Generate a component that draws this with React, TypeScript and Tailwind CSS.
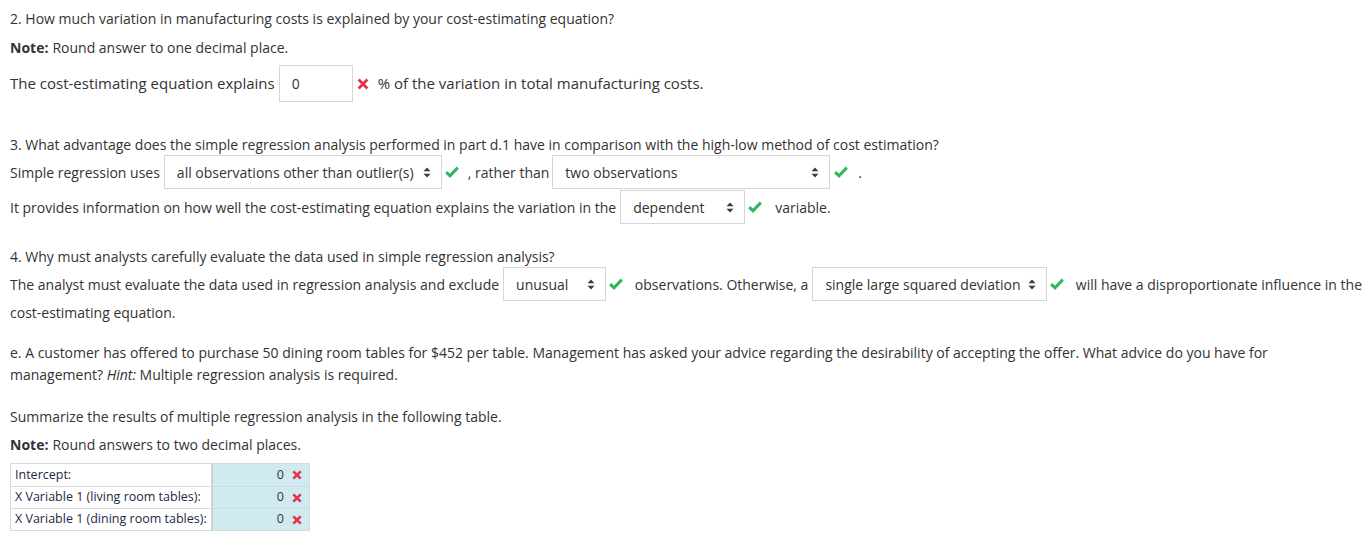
import React from "react";

const font = { fontFamily: '"Open Sans", "Noto Sans", sans-serif' };

function Check() {
  return (
    <svg width="14" height="12" viewBox="0 0 14 12" className="shrink-0">
      <path d="M1.2 6.2 L5 9.8 L12.8 1.6" fill="none" stroke="#2cb85c" strokeWidth="3" />
    </svg>
  );
}

function Cross() {
  return (
    <svg width="12" height="12" viewBox="0 0 12 12" className="shrink-0">
      <path d="M1.6 1.6 L10.4 10.4 M10.4 1.6 L1.6 10.4" fill="none" stroke="#e53146" strokeWidth="2.8" />
    </svg>
  );
}

function Arrows() {
  return (
    <svg width="8" height="11" viewBox="0 0 8 11" className="shrink-0">
      <path d="M4 0.5 L7.5 4.2 L0.5 4.2 Z" fill="#3a3a3a" />
      <path d="M4 10.5 L7.5 6.8 L0.5 6.8 Z" fill="#3a3a3a" />
    </svg>
  );
}

function Select({ value, width }: { value: string; width: string }) {
  return (
    <div
      className={`flex h-[34px] items-center justify-between border border-[#d3d6da] bg-white pl-3 pr-[10px] ${width}`}
    >
      <span>{value}</span>
      <Arrows />
    </div>
  );
}

const rows = ["Intercept:", "X Variable 1 (living room tables):", "X Variable 1 (dining room tables):"];

export default function App() {
  return (
    <div className="flex flex-col px-[10px] text-[14px] text-[#333]" style={font}>
      <div className="mt-[8px] flex h-[20px] items-center">
        2. How much variation in manufacturing costs is explained by your cost-estimating equation?
      </div>
      <div className="mt-[9px] flex h-[20px] items-center">
        <span className="mr-1 font-bold">Note:</span> Round answer to one decimal place.
      </div>
      <div className="mt-[8px] flex h-[37px] items-center text-[15px]">
        <span>The cost-estimating equation explains</span>
        <div className="ml-[4px] flex h-[37px] w-[74px] items-center border border-[#d3d6da] pl-3 text-[14px]">0</div>
        <span className="ml-[4px]">
          <Cross />
        </span>
        <span className="ml-[9px]">% of the variation in total manufacturing costs.</span>
      </div>

      <div className="mt-[32px] flex h-[20px] items-center">
        3. What advantage does the simple regression analysis performed in part d.1 have in comparison with the
        high-low method of cost estimation?
      </div>
      <div className="mt-[1px] flex h-[34px] items-center">
        <span className="mr-[4px]">Simple regression uses</span>
        <Select value="all observations other than outlier(s)" width="w-[278px]" />
        <span className="ml-[3px]">
          <Check />
        </span>
        <span className="ml-[9px] mr-[3px]">, rather than</span>
        <Select value="two observations" width="w-[278px]" />
        <span className="ml-[4px]">
          <Check />
        </span>
        <span className="ml-[10px]">.</span>
      </div>
      <div className="mt-[1px] flex h-[34px] items-center">
        <span className="mr-[4px]">It provides information on how well the cost-estimating equation explains the variation in the</span>
        <Select value="dependent" width="w-[125px]" />
        <span className="ml-[3px]">
          <Check />
        </span>
        <span className="ml-[13px]">variable.</span>
      </div>

      <div className="mt-[22px] flex h-[20px] items-center">
        4. Why must analysts carefully evaluate the data used in simple regression analysis?
      </div>
      <div className="mt-[1px] flex h-[34px] items-center whitespace-nowrap">
        <span className="mr-[4px]">The analyst must evaluate the data used in regression analysis and exclude</span>
        <Select value="unusual" width="w-[103px]" />
        <span className="ml-[3px]">
          <Check />
        </span>
        <span className="ml-[12px] mr-[4px]">observations. Otherwise, a</span>
        <Select value="single large squared deviation" width="w-[235px]" />
        <span className="ml-[3px]">
          <Check />
        </span>
        <span className="ml-[12px]">will have a disproportionate influence in the</span>
      </div>
      <div className="mt-[1px] flex h-[20px] items-center">cost-estimating equation.</div>

      <div className="mt-[20px] leading-[22px]">
        e. A customer has offered to purchase 50 dining room tables for $452 per table. Management has asked your
        advice regarding the desirability of accepting the offer. What advice do you have for
        <br />
        management? <i>Hint:</i> Multiple regression analysis is required.
      </div>

      <div className="mt-[20px] flex h-[20px] items-center">
        Summarize the results of multiple regression analysis in the following table.
      </div>
      <div className="mt-[8px] flex h-[20px] items-center">
        <span className="mr-1 font-bold">Note:</span> Round answers to two decimal places.
      </div>

      <div className="mt-[9px] w-[300px] border border-[#d9d9d9] text-[12.5px]">
        {rows.map((r, i) => (
          <div key={r} className={`flex h-[22px] ${i > 0 ? "border-t border-[#d9d9d9]" : ""}`}>
            <div className="flex w-[202px] items-center border-r-2 border-[#d0d0d0] pl-[4px] text-[#1e2a45]">{r}</div>
            <div className="flex flex-1 items-center justify-end gap-[8px] bg-[#cfeaf1] pr-[7px] text-[#333]">
              <span>0</span>
              <svg width="10" height="10" viewBox="0 0 10 10">
                <path d="M1.3 1.3 L8.7 8.7 M8.7 1.3 L1.3 8.7" fill="none" stroke="#e53146" strokeWidth="2.5" />
              </svg>
            </div>
          </div>
        ))}
      </div>
    </div>
  );
}
